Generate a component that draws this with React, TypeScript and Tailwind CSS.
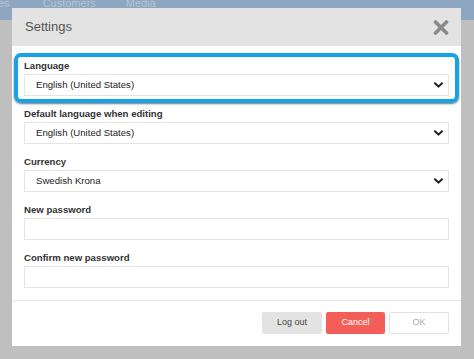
const font = { fontFamily: '"Liberation Sans", Arial, sans-serif' };

const fields = [
  { label: 'Default language when editing', value: 'English (United States)', select: true },
  { label: 'Currency', value: 'Swedish Krona', select: true },
  { label: 'New password', value: '', select: false },
  { label: 'Confirm new password', value: '', select: false },
];

function Chevron() {
  return (
    <svg width="9" height="6" viewBox="0 0 9 6" aria-hidden="true">
      <path d="M1 1.2 L4.5 4.6 L8 1.2" fill="none" stroke="#1f1f1f" strokeWidth="2" strokeLinecap="round" strokeLinejoin="round" />
    </svg>
  );
}

function Field({ label, value, select }: { label: string; value: string; select: boolean }) {
  return (
    <div>
      <div className="text-[9.6px] leading-[12px] font-bold text-[#333] mb-[2px]">{label}</div>
      <div className="h-[22px] border border-[#e4e4e4] bg-white flex items-center justify-between pl-[11px] pr-[5px]">
        <span className="text-[9.6px] text-[#222]">{value}</span>
        {select && <Chevron />}
      </div>
    </div>
  );
}

export default function App() {
  return (
    <div className="relative w-[474px] h-[359px] bg-[#bfbfbf] overflow-hidden" style={font}>
      <div className="h-[22px] bg-[#8ea6bf] flex text-[11px] leading-[11px] text-[#b4c5d7] -mt-[2px] pt-0">
        <span className="pl-0 -ml-[2px] mt-[0px]">es</span>
        <span className="ml-[33px]">Customers</span>
        <span className="ml-[30px]">Media</span>
      </div>

      <div className="absolute left-[12px] top-[8px] w-[449px] h-[338px] bg-white flex flex-col">
        <div className="h-[38px] bg-[#e3e3e3] flex items-center justify-between px-[12px]">
          <span className="text-[13px] text-[#555] pl-[1px]">Settings</span>
          <svg width="16" height="15" viewBox="0 0 16 15" aria-hidden="true">
            <path d="M2.5 2 L13.5 13 M13.5 2 L2.5 13" stroke="#8a8a8a" strokeWidth="3.6" strokeLinecap="round" />
          </svg>
        </div>

        <div className="mt-[7px] mx-[2px] border-4 border-[#17a2e6] rounded-[7px] px-[6px] pt-[3px] pb-[3px] shadow-[0_1px_2px_rgba(0,0,0,0.55)]">
          <Field label="Language" value="English (United States)" select />
        </div>

        <div className="px-[12px] pt-[5px] pb-[12px] flex flex-col gap-[12px] border-b border-[#e6e6e6]">
          {fields.map((f) => (
            <Field key={f.label} {...f} />
          ))}
        </div>

        <div className="flex justify-end gap-[4px] px-[12px] pt-[11px]">
          <button className="w-[60px] h-[22px] rounded-[2px] bg-[#e3e3e3] text-[9px] text-[#444]">Log out</button>
          <button className="w-[59px] h-[22px] rounded-[2px] bg-[#f45e58] text-[9px] text-white">Cancel</button>
          <button className="w-[60px] h-[22px] rounded-[2px] bg-white border border-[#e2e2e2] text-[9px] text-[#aaa]">OK</button>
        </div>
      </div>
    </div>
  );
}
